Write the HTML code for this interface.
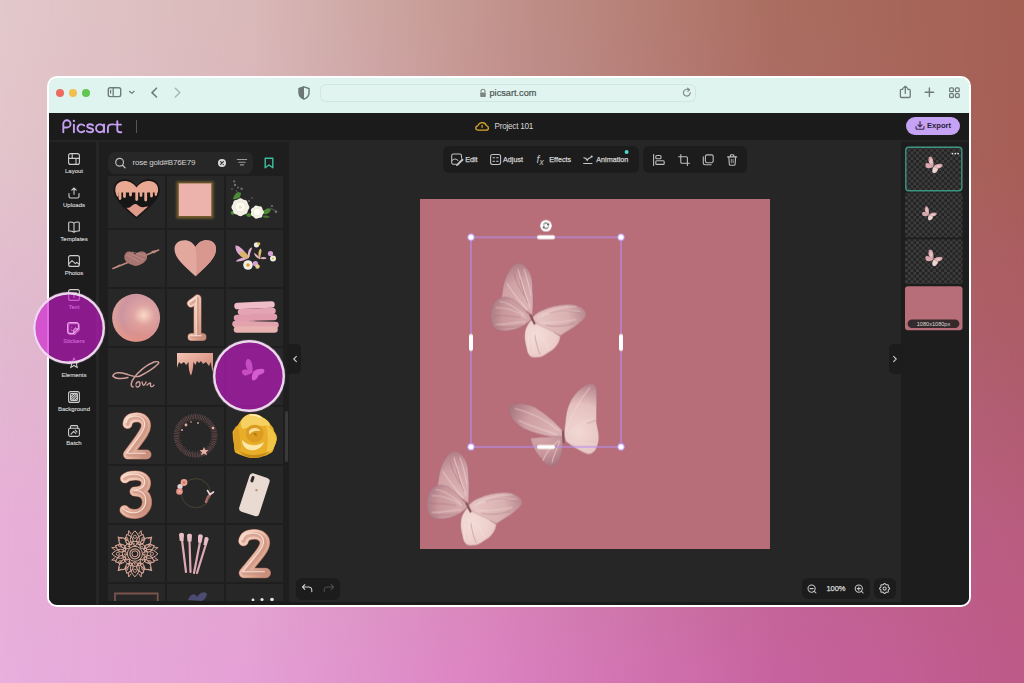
<!DOCTYPE html>
<html><head><meta charset="utf-8">
<style>
html,body{margin:0;padding:0;}
body{width:1024px;height:683px;position:relative;overflow:hidden;font-family:"Liberation Sans",sans-serif;background:#c98aa0;}
.a{position:absolute;}
#bg0{left:0px;top:0;width:256px;height:683px;background:linear-gradient(to bottom,#e3c8cb 15px,#e3c4cc 160px,#e2b8d0 341px,#e8b0d8 530px,#e9afdd 668px);}
#bm0{left:0px;top:0;width:256px;height:683px;background:linear-gradient(to bottom,#d9b8b8 15px,#dab6bb 160px,#ddb0c2 341px,#e2a5ce 530px,#e4a0d4 668px);-webkit-mask-image:linear-gradient(to right,transparent,#000);mask-image:linear-gradient(to right,transparent,#000);}
#bg1{left:256px;top:0;width:256px;height:683px;background:linear-gradient(to bottom,#d9b8b8 15px,#dab6bb 160px,#ddb0c2 341px,#e2a5ce 530px,#e4a0d4 668px);}
#bm1{left:256px;top:0;width:256px;height:683px;background:linear-gradient(to bottom,#c0918a 15px,#c28f8f 160px,#c98b9c 341px,#d484b3 530px,#da80be 668px);-webkit-mask-image:linear-gradient(to right,transparent,#000);mask-image:linear-gradient(to right,transparent,#000);}
#bg2{left:512px;top:0;width:256px;height:683px;background:linear-gradient(to bottom,#c0918a 15px,#c28f8f 160px,#c98b9c 341px,#d484b3 530px,#da80be 668px);}
#bm2{left:512px;top:0;width:256px;height:683px;background:linear-gradient(to bottom,#ab6e62 15px,#ae6d68 160px,#b56a78 341px,#c16693 530px,#c764a0 668px);-webkit-mask-image:linear-gradient(to right,transparent,#000);mask-image:linear-gradient(to right,transparent,#000);}
#bg3{left:768px;top:0;width:256px;height:683px;background:linear-gradient(to bottom,#ab6e62 15px,#ae6d68 160px,#b56a78 341px,#c16693 530px,#c764a0 668px);}
#bm3{left:768px;top:0;width:256px;height:683px;background:linear-gradient(to bottom,#a45f53 15px,#a65e56 160px,#ad5c68 341px,#b85c7e 530px,#bd5a88 668px);-webkit-mask-image:linear-gradient(to right,transparent,#000);mask-image:linear-gradient(to right,transparent,#000);}
#win{left:47px;top:76px;width:924px;height:531px;background:#fff;border-radius:10px;overflow:hidden;}
#inner{left:2px;top:1.6px;width:920px;height:527.4px;border-radius:8px;overflow:hidden;background:linear-gradient(to bottom,#e0f4ef 0,#e0f4ef 34.9px,#1b1b1b 34.9px);}
#chrome{left:0;top:0;width:920px;height:35px;background:#dff3ee;}
.txt{white-space:nowrap;}
</style></head>
<body>
<div class="a" id="bg0"></div><div class="a" id="bm0"></div><div class="a" id="bg1"></div><div class="a" id="bm1"></div><div class="a" id="bg2"></div><div class="a" id="bm2"></div><div class="a" id="bg3"></div><div class="a" id="bm3"></div>

<div class="a" id="win"><div class="a" id="inner"><div class="a" id="pg" style="left:-49px;top:-77.6px;width:1024px;height:683px;">
  <!-- chrome -->
  <div class="a" style="left:0;top:0;width:1024px;height:112.5px;background:#e0f4ef;"></div>
  <div class="a" style="left:56px;top:88.5px;width:8px;height:8px;border-radius:50%;background:#ec6a5e;"></div>
  <div class="a" style="left:69px;top:88.5px;width:8px;height:8px;border-radius:50%;background:#f3bd4f;"></div>
  <div class="a" style="left:82.4px;top:88.5px;width:8px;height:8px;border-radius:50%;background:#5fc553;"></div>
  <svg class="a" style="left:100px;top:80px" width="90" height="26" viewBox="0 0 90 26">
    <g fill="none" stroke="#6f7c78" stroke-linecap="round" stroke-linejoin="round">
      <rect x="8.3" y="7.8" width="12.4" height="8.8" rx="1.8" stroke-width="1.4"/>
      <line x1="13.2" y1="8" x2="13.2" y2="16.4" stroke-width="1.3"/>
      <line x1="10.6" y1="10.5" x2="10.6" y2="13" stroke-width="1.3"/>
      <path d="M29.5 11.3 L31.8 13.4 L34.1 11.3" stroke-width="1.2"/>
      <path d="M56.5 8.2 L52 12.6 L56.5 17" stroke-width="1.6"/>
      <path d="M75.3 8.2 L79.8 12.6 L75.3 17" stroke="#a8b6b1" stroke-width="1.4"/>
    </g>
  </svg>
  <svg class="a" style="left:296px;top:85px" width="16" height="16" viewBox="0 0 16 16">
    <path d="M8 1.8 L13 3.6 V8 C13 11 10.8 13 8 14.2 C5.2 13 3 11 3 8 V3.6 Z" fill="none" stroke="#6b7875" stroke-width="1.4"/>
    <path d="M8 1.8 V14.2 C5.2 13 3 11 3 8 V3.6 Z" fill="#6b7875"/>
  </svg>
  <div class="a" style="left:319.5px;top:83.5px;width:376px;height:18.5px;border-radius:6px;background:#e1f4ef;box-shadow:inset 0 0 0 1px #d2e6e0;"></div>
  <svg class="a" style="left:478px;top:88px" width="10" height="10" viewBox="0 0 10 10">
    <path d="M3 4.5 V3.2 C3 1.9 3.9 1.2 5 1.2 C6.1 1.2 7 1.9 7 3.2 V4.5" fill="none" stroke="#7b8784" stroke-width="1.1"/>
    <rect x="2.2" y="4.4" width="5.6" height="4.6" rx="0.8" fill="#7b8784"/>
  </svg>
  <div class="a txt" style="left:489.5px;top:86.5px;font-size:9.2px;line-height:13px;color:#4a5553;-webkit-text-stroke:0.2px #4a5553;">picsart.com</div>
  <svg class="a" style="left:681px;top:87px" width="12" height="12" viewBox="0 0 12 12">
    <path d="M9.2 5.6 A3.4 3.4 0 1 1 7.6 2.8" fill="none" stroke="#7d8986" stroke-width="1.1" stroke-linecap="round"/>
    <path d="M6.6 1.2 L8.6 2.8 L6.8 4.4" fill="none" stroke="#7d8986" stroke-width="1.1" stroke-linecap="round" stroke-linejoin="round"/>
  </svg>
  <svg class="a" style="left:890px;top:80px" width="80" height="26" viewBox="0 0 80 26">
    <g fill="none" stroke="#6f7c78" stroke-width="1.3" stroke-linecap="round" stroke-linejoin="round">
      <path d="M12.8 9.3 H11.3 C10.7 9.3 10.4 9.7 10.4 10.2 V16.7 C10.4 17.2 10.8 17.5 11.3 17.5 H19.3 C19.8 17.5 20.2 17.2 20.2 16.7 V10.2 C20.2 9.7 19.8 9.3 19.3 9.3 H17.8"/>
      <path d="M15.3 13.4 V6.3 M12.9 8.4 L15.3 6.1 L17.7 8.4"/>
      <path d="M39.4 8 V16.4 M35.2 12.2 H43.6" stroke-width="1.4"/>
      <rect x="59.6" y="7.9" width="3.8" height="3.8" rx="1"/>
      <rect x="65.4" y="7.9" width="3.8" height="3.8" rx="1"/>
      <rect x="59.6" y="13.7" width="3.8" height="3.8" rx="1"/>
      <rect x="65.4" y="13.7" width="3.8" height="3.8" rx="1"/>
    </g>
  </svg>
  <!-- header -->
  <div class="a" style="left:0;top:112.5px;width:1024px;height:28px;background:#1b1b1b;"></div>
  <div class="a" style="left:0;top:140px;width:1024px;height:1.8px;background:#252525;"></div>
  <svg class="a" style="left:58px;top:115px;overflow:visible" width="70" height="23" viewBox="58 115 70 23">
    <g fill="none" stroke="#c49ff2" stroke-width="1.9" stroke-linecap="round" stroke-linejoin="round">
      <path d="M63.3 132.2 V123.9 A3.6 3.6 0 1 1 66.9 127.5 H63.6"/>
      <path d="M73.9 124.6 V132.2"/>
      <path d="M84.2 125.6 A3.9 3.9 0 1 0 84.2 131"/>
      <path d="M93 125.3 C92.2 124.5 91.2 124.3 90 124.3 C88.4 124.3 87.3 125.1 87.3 126.3 C87.3 129 93.1 127.6 93.1 130.2 C93.1 131.5 91.9 132.3 90.2 132.3 C88.8 132.3 87.7 131.9 86.9 131.1"/>
      <circle cx="100" cy="128.3" r="3.95"/>
      <path d="M104 124.5 V132.2"/>
      <path d="M107.9 132.2 V127.8 C107.9 125.6 109.6 124.4 112 124.4 H113.8"/>
      <path d="M117.3 121.2 V129.4 C117.3 131.2 118.3 132.2 120 132.2 H121.3 M115.2 124.6 H121"/>
    </g>
    <circle cx="73.9" cy="120.9" r="1.15" fill="#c49ff2"/>
  </svg>
  <div class="a" style="left:136px;top:120px;width:1px;height:13px;background:#555;"></div>
  <svg class="a" style="left:474px;top:120px" width="16" height="13" viewBox="0 0 16 13">
    <path d="M4.4 10.2 C2.6 10.2 1.8 9.2 1.8 8 C1.8 6.8 2.7 6 3.9 5.9 C4.6 3.9 6.2 2.6 8.3 2.6 C10.3 2.6 11.8 3.8 12.3 5.6 C13.6 5.8 14.4 6.7 14.4 7.9 C14.4 9.2 13.4 10.2 12 10.2 Z" fill="none" stroke="#d9a92c" stroke-width="1.3" stroke-linejoin="round"/>
    <path d="M8.1 5.3 V7.4" stroke="#d9a92c" stroke-width="1.1" stroke-linecap="round"/>
  </svg>
  <div class="a txt" style="left:494.5px;top:121.5px;font-size:8.2px;line-height:10px;color:#d6d6d6;letter-spacing:-0.25px;">Project 101</div>
  <div class="a" style="left:906px;top:117px;width:54px;height:18px;border-radius:9px;background:#c6a2f4;"></div>
  <svg class="a" style="left:914px;top:120px" width="12" height="11" viewBox="0 0 12 11">
    <path d="M6 1.5 V6.8 M4 4.8 L6 6.9 L8 4.8" fill="none" stroke="#3a2a4a" stroke-width="1.2" stroke-linecap="round" stroke-linejoin="round"/>
    <path d="M2 6.5 V8 C2 8.8 2.6 9.3 3.3 9.3 H8.7 C9.4 9.3 10 8.8 10 8 V6.5" fill="none" stroke="#3a2a4a" stroke-width="1.1" stroke-linecap="round"/>
  </svg>
  <div class="a txt" style="left:927px;top:121px;font-size:7.6px;line-height:9px;font-weight:700;color:#2a1d36;">Export</div>
  <!-- sidebar -->
  <div class="a" style="left:49px;top:141.8px;width:47px;height:459px;background:#1c1c1c;"></div>
  <div class="a" style="left:96px;top:141px;width:3px;height:464px;background:#262626;"></div>
<!--SIDEBAR-->
  <svg class="a" style="left:68px;top:153px" width="12" height="12" viewBox="0 0 12 12"><g fill="none" stroke="#cdcdcd" stroke-width="1.1" stroke-linecap="round" stroke-linejoin="round"><rect x="0.6" y="0.6" width="10.8" height="10.8" rx="2"/><path d="M0.6 5.4 H11.4 M4.2 0.6 V5.4 M8 5.4 V11.4"/></g></svg>
  <div class="a txt" style="left:23px;width:102px;text-align:center;top:168.4px;font-size:6px;line-height:6px;color:#d2d2d2;-webkit-text-stroke:0.15px #d2d2d2;">Layout</div>
  <svg class="a" style="left:68px;top:187px" width="12" height="12" viewBox="0 0 12 12"><g fill="none" stroke="#cdcdcd" stroke-width="1.1" stroke-linecap="round" stroke-linejoin="round"><path d="M6 1 V7.2 M3.8 3.2 L6 1 L8.2 3.2"/><path d="M1 6.5 V9.4 C1 10.4 1.6 11 2.6 11 H9.4 C10.4 11 11 10.4 11 9.4 V6.5"/></g></svg>
  <div class="a txt" style="left:23px;width:102px;text-align:center;top:202.4px;font-size:6px;line-height:6px;color:#d2d2d2;-webkit-text-stroke:0.15px #d2d2d2;">Uploads</div>
  <svg class="a" style="left:68px;top:221px" width="12" height="12" viewBox="0 0 12 12"><g fill="none" stroke="#cdcdcd" stroke-width="1.1" stroke-linecap="round" stroke-linejoin="round"><path d="M6 2.2 C4.8 1.2 3.2 0.9 1.6 1 C1 1 0.7 1.4 0.7 2 V10 C2.6 9.8 4.5 10.2 6 11.2 C7.5 10.2 9.4 9.8 11.3 10 V2 C11.3 1.4 11 1 10.4 1 C8.8 0.9 7.2 1.2 6 2.2 Z M6 2.2 V11.2"/></g></svg>
  <div class="a txt" style="left:23px;width:102px;text-align:center;top:236.4px;font-size:6px;line-height:6px;color:#d2d2d2;-webkit-text-stroke:0.15px #d2d2d2;">Templates</div>
  <svg class="a" style="left:68px;top:255px" width="12" height="12" viewBox="0 0 12 12"><g fill="none" stroke="#cdcdcd" stroke-width="1.1" stroke-linecap="round" stroke-linejoin="round"><rect x="0.6" y="0.6" width="10.8" height="10.8" rx="2"/><path d="M0.8 8.8 L4 5.6 L7.4 8.6 L8.8 7.4 L11.2 9.2"/></g></svg>
  <div class="a txt" style="left:23px;width:102px;text-align:center;top:270.4px;font-size:6px;line-height:6px;color:#d2d2d2;-webkit-text-stroke:0.15px #d2d2d2;">Photos</div>
  <svg class="a" style="left:68px;top:289px" width="12" height="12" viewBox="0 0 12 12"><g fill="none" stroke="#cdcdcd" stroke-width="1.1" stroke-linecap="round" stroke-linejoin="round"><rect x="0.6" y="0.6" width="10.8" height="10.8" rx="2"/><path d="M3.6 4 H8.4 M6 4 V8.6"/></g></svg>
  <div class="a txt" style="left:23px;width:102px;text-align:center;top:304.4px;font-size:6px;line-height:6px;color:#d2d2d2;-webkit-text-stroke:0.15px #d2d2d2;">Text</div>
  <svg class="a" style="left:68px;top:323px" width="12" height="12" viewBox="0 0 12 12"><g fill="none" stroke="#cdcdcd" stroke-width="1.1" stroke-linecap="round" stroke-linejoin="round"><path d="M11.4 6.8 V2.6 C11.4 1.4 10.6 0.6 9.4 0.6 H2.6 C1.4 0.6 0.6 1.4 0.6 2.6 V9.4 C0.6 10.6 1.4 11.4 2.6 11.4 H6.8 Z M6.8 11.4 V8.4 C6.8 7.5 7.5 6.8 8.4 6.8 H11.4"/><path d="M3.8 4 V4.6 M7.6 4 V4.6 M3.2 6.8 C3.8 7.6 4.6 8 5.4 8"/></g></svg>
  <div class="a txt" style="left:23px;width:102px;text-align:center;top:338.4px;font-size:6px;line-height:6px;color:#d2d2d2;-webkit-text-stroke:0.15px #d2d2d2;">Stickers</div>
  <svg class="a" style="left:68px;top:357px" width="12" height="12" viewBox="0 0 12 12"><g fill="none" stroke="#cdcdcd" stroke-width="1.1" stroke-linecap="round" stroke-linejoin="round"><path d="M6 0.8 L7.4 4.2 L11.2 4.4 L8.3 6.8 L9.3 10.6 L6 8.5 L2.7 10.6 L3.7 6.8 L0.8 4.4 L4.6 4.2 Z"/></g></svg>
  <div class="a txt" style="left:23px;width:102px;text-align:center;top:372.4px;font-size:6px;line-height:6px;color:#d2d2d2;-webkit-text-stroke:0.15px #d2d2d2;">Elements</div>
  <svg class="a" style="left:68px;top:391px" width="12" height="12" viewBox="0 0 12 12"><g fill="none" stroke="#cdcdcd" stroke-width="1.1" stroke-linecap="round" stroke-linejoin="round"><rect x="0.6" y="0.6" width="10.8" height="10.8" rx="2"/><rect x="2.6" y="2.6" width="6.8" height="6.8" rx="0.6"/><path d="M2.8 6 L6 2.8 M2.8 8.4 L8.4 2.8 M4.4 9.2 L9.2 4.4 M6.8 9.2 L9.2 6.8"/></g></svg>
  <div class="a txt" style="left:23px;width:102px;text-align:center;top:406.4px;font-size:6px;line-height:6px;color:#d2d2d2;-webkit-text-stroke:0.15px #d2d2d2;">Background</div>
  <svg class="a" style="left:68px;top:425px" width="12" height="12" viewBox="0 0 12 12"><g fill="none" stroke="#cdcdcd" stroke-width="1.1" stroke-linecap="round" stroke-linejoin="round"><path d="M2.4 3.2 V1.8 C2.4 1.1 2.9 0.6 3.6 0.6 H8.6 C9.3 0.6 9.8 1.1 9.8 1.8 V3.2"/><rect x="0.6" y="3.2" width="10.8" height="8.2" rx="1.6"/><path d="M3 9.2 L5.6 6.4 L7.8 8.4 M7.2 5.2 L9 7"/></g></svg>
  <div class="a txt" style="left:23px;width:102px;text-align:center;top:440.4px;font-size:6px;line-height:6px;color:#d2d2d2;-webkit-text-stroke:0.15px #d2d2d2;">Batch</div>
<!--/SIDEBAR-->
  <!-- sticker panel -->
  <div class="a" style="left:99px;top:141.8px;width:190px;height:459px;background:#1e1e1e;"></div>
<!--PANEL-->
  <div class="a" style="left:99px;top:141px;width:190px;height:460px;overflow:hidden;">
   <div class="a" style="left:-99px;top:-141px;width:1024px;height:683px;">
<div class="a" style="left:108px;top:171px;width:57px;height:57px;background:#272727;"></div>
<div class="a" style="left:167px;top:171px;width:57px;height:57px;background:#272727;"></div>
<div class="a" style="left:226px;top:171px;width:57px;height:57px;background:#272727;"></div>
<div class="a" style="left:108px;top:230px;width:57px;height:57px;background:#272727;"></div>
<div class="a" style="left:167px;top:230px;width:57px;height:57px;background:#272727;"></div>
<div class="a" style="left:226px;top:230px;width:57px;height:57px;background:#272727;"></div>
<div class="a" style="left:108px;top:289px;width:57px;height:57px;background:#272727;"></div>
<div class="a" style="left:167px;top:289px;width:57px;height:57px;background:#272727;"></div>
<div class="a" style="left:226px;top:289px;width:57px;height:57px;background:#272727;"></div>
<div class="a" style="left:108px;top:348px;width:57px;height:57px;background:#272727;"></div>
<div class="a" style="left:167px;top:348px;width:57px;height:57px;background:#272727;"></div>
<div class="a" style="left:226px;top:348px;width:57px;height:57px;background:#272727;"></div>
<div class="a" style="left:108px;top:407px;width:57px;height:57px;background:#272727;"></div>
<div class="a" style="left:167px;top:407px;width:57px;height:57px;background:#272727;"></div>
<div class="a" style="left:226px;top:407px;width:57px;height:57px;background:#272727;"></div>
<div class="a" style="left:108px;top:466px;width:57px;height:57px;background:#272727;"></div>
<div class="a" style="left:167px;top:466px;width:57px;height:57px;background:#272727;"></div>
<div class="a" style="left:226px;top:466px;width:57px;height:57px;background:#272727;"></div>
<div class="a" style="left:108px;top:525px;width:57px;height:57px;background:#272727;"></div>
<div class="a" style="left:167px;top:525px;width:57px;height:57px;background:#272727;"></div>
<div class="a" style="left:226px;top:525px;width:57px;height:57px;background:#272727;"></div>
<div class="a" style="left:108px;top:584px;width:57px;height:57px;background:#272727;"></div>
<div class="a" style="left:167px;top:584px;width:57px;height:57px;background:#272727;"></div>
<div class="a" style="left:226px;top:584px;width:57px;height:57px;background:#272727;"></div>
<!--STICKERS-->
  <svg class="a" style="left:98px;top:141px" width="191" height="460" viewBox="98 141 191 460">
    <defs>
      <linearGradient id="rg1" x1="0" y1="0" x2="1" y2="1"><stop offset="0" stop-color="#f3c4b4"/><stop offset="0.5" stop-color="#e0a090"/><stop offset="1" stop-color="#c98272"/></linearGradient>
      <linearGradient id="rg2" x1="0" y1="0" x2="0" y2="1"><stop offset="0" stop-color="#d9958a"/><stop offset="1" stop-color="#c47a70"/></linearGradient>
      <radialGradient id="sph" cx="0.66" cy="0.45" r="0.62"><stop offset="0" stop-color="#fad8c6"/><stop offset="0.35" stop-color="#dea4a2"/><stop offset="0.75" stop-color="#cc94a0"/><stop offset="1" stop-color="#dca09c"/></radialGradient><linearGradient id="sph2" x1="0" y1="0" x2="0" y2="1"><stop offset="0.5" stop-color="#e88c78" stop-opacity="0"/><stop offset="1" stop-color="#ec8c78" stop-opacity="0.6"/></linearGradient>
      <linearGradient id="bal" x1="0" y1="0" x2="1" y2="1"><stop offset="0" stop-color="#f6d6c6"/><stop offset="0.5" stop-color="#e8b8a4"/><stop offset="1" stop-color="#c8907c"/></linearGradient>
      <linearGradient id="brush" x1="0" y1="0" x2="1" y2="1"><stop offset="0" stop-color="#f0c0c8"/><stop offset="0.5" stop-color="#e0a0b0"/><stop offset="1" stop-color="#f0c8c0"/></linearGradient>
      <radialGradient id="gold" cx="0.45" cy="0.4" r="0.6"><stop offset="0" stop-color="#fbe4a0"/><stop offset="0.5" stop-color="#efc04a"/><stop offset="1" stop-color="#c89020"/></radialGradient>
      <filter id="glow" x="-30%" y="-30%" width="160%" height="160%"><feGaussianBlur stdDeviation="1.2"/></filter>
      <filter id="sft" x="-20%" y="-20%" width="140%" height="140%"><feGaussianBlur stdDeviation="0.35"/></filter>
    </defs>
    <g filter="url(#sft)">
    <!-- r1c1 drip heart -->
    <clipPath id="hclip"><path d="M136.5 216.8 C128.5 209.5 115.5 200 115.3 190 C115.2 184.5 119 181 124.5 181 C129.5 181 133.5 183.5 136.5 187.5 C139.5 183.5 143.5 181 149 181 C154.5 181 158.2 184.5 158.1 190 C158 200 144.5 209.5 136.5 216.8 Z"/></clipPath>
    <path d="M136.5 218.7 C128 211 114 201 113.7 190 C113.5 183.5 118 179.3 124.5 179.3 C130 179.3 134 182 136.5 186 C139.5 182 143.5 179.3 149 179.3 C155.5 179.3 159.7 183.5 159.7 190 C159.7 201 145 211 136.5 218.7 Z" fill="#191515"/>
    <g clip-path="url(#hclip)">
      <rect x="110" y="175" width="55" height="17.5" fill="#e9a892"/>
      <g stroke="#e9a892" stroke-width="2.8" stroke-linecap="round">
        <path d="M117 191 V195.5 M120 191 V198.5 M124.5 191 V196.5 M130.5 191 V195 M136.7 191 V199.5 M141 191 V195.5 M145.7 191 V200 M151.5 191 V196 M156 191 V194.5"/>
      </g>
      <path d="M110 208.5 L122.8 208.5 C126 207 128 209 131 206.5 C133 204.5 135 203.5 137 204.5 C139 206 141 208 144 207 C147 206 149 206.5 151 206.8 L165 206.8 V225 H110 Z" fill="#df9a8a"/>
    </g>
    <!-- r1c2 square -->
    <rect x="176.5" y="181.5" width="37" height="37" fill="#b88a30" filter="url(#glow)" opacity="0.55"/>
    <rect x="178.8" y="183.4" width="32.5" height="32.6" fill="#ecb3ad"/>
    <!-- r1c3 roses -->
    <g fill="#8a8a80" opacity="0.75">
      <circle cx="234.2" cy="181.4" r="1.1"/><circle cx="235" cy="185" r="1.2"/><circle cx="238" cy="187.5" r="0.9"/><circle cx="241.6" cy="188.8" r="1.2"/><circle cx="232" cy="189" r="0.8"/>
      <circle cx="272" cy="206" r="1.1"/><circle cx="276" cy="211.7" r="1.3"/><circle cx="268" cy="209" r="0.8"/><circle cx="252" cy="198" r="0.8"/><circle cx="249" cy="201" r="0.9"/>
    </g>
    <path d="M236 190 C238 194 240 198 241 200 M270 208 C272 209 274 210 276 211" stroke="#666660" stroke-width="0.8" fill="none"/>
    <g fill="#4e8a34">
      <path d="M233 199 C234 194 238 191 241 193 C241 197 237 200 233 199 Z"/>
      <path d="M230.5 213 C231.5 210.5 234 210 235.5 212 C234.5 215 232 216 230.5 213 Z"/>
      <path d="M246 215 C248 212.5 251 213 252 215.5 C250 217.5 247.5 217.5 246 215 Z"/>
      <path d="M262 213 C264 209 268 207.5 271 209 C270 213 266 216 262 213 Z"/>
      <path d="M262 216 C265 215 268 215.5 270 217 C267 218.5 264 218 262 216 Z" opacity="0.8"/>
    </g>
    <path d="M249.45 207.20 L248.83 208.88 L247.93 210.32 L247.55 211.98 L246.80 213.60 L245.18 214.35 L243.52 214.73 L242.08 215.63 L240.40 216.25 L238.72 215.63 L237.28 214.73 L235.62 214.35 L234.00 213.60 L233.25 211.98 L232.87 210.32 L231.97 208.88 L231.35 207.20 L231.97 205.52 L232.87 204.08 L233.25 202.42 L234.00 200.80 L235.62 200.05 L237.28 199.67 L238.72 198.77 L240.40 198.15 L242.08 198.77 L243.52 199.67 L245.18 200.05 L246.80 200.80 L247.55 202.42 L247.93 204.08 L248.83 205.52 Z" fill="#f3f0e6"/>
    <path d="M245.60 207.00 L245.03 208.29 L244.18 209.30 L243.74 210.54 L242.90 211.68 L241.49 211.83 L240.20 211.60 L238.91 211.83 L237.50 211.68 L236.66 210.54 L236.22 209.30 L235.37 208.29 L234.80 207.00 L235.37 205.71 L236.22 204.70 L236.66 203.46 L237.50 202.32 L238.91 202.17 L240.20 202.40 L241.49 202.17 L242.90 202.32 L243.74 203.46 L244.18 204.70 L245.03 205.71 Z" fill="#fffdf2" stroke="#e4dcc8" stroke-width="0.6"/>
    <circle cx="240.2" cy="207.2" r="1.6" fill="#efe2c0"/>
    <path d="M264.00 212.10 L263.44 213.52 L262.61 214.70 L262.20 216.09 L261.44 217.42 L259.98 217.87 L258.54 217.95 L257.20 218.50 L255.69 218.73 L254.42 217.87 L253.46 216.79 L252.20 216.09 L251.07 215.05 L250.96 213.52 L251.20 212.10 L250.96 210.68 L251.07 209.15 L252.20 208.11 L253.46 207.41 L254.42 206.33 L255.69 205.47 L257.20 205.70 L258.54 206.25 L259.98 206.33 L261.44 206.78 L262.20 208.11 L262.61 209.50 L263.44 210.68 Z" fill="#f3f0e6"/>
    <path d="M260.90 212.00 L260.42 213.11 L259.67 213.94 L259.12 214.91 L258.21 215.71 L257.00 215.60 L255.98 215.14 L254.88 214.91 L253.84 214.29 L253.58 213.11 L253.70 212.00 L253.58 210.89 L253.84 209.71 L254.88 209.09 L255.98 208.86 L257.00 208.40 L258.21 208.29 L259.12 209.09 L259.67 210.06 L260.42 210.89 Z" fill="#fffdf2" stroke="#e4dcc8" stroke-width="0.5"/>
    <!-- r2c1 arrow heart -->
    <path d="M113 268.4 L158.6 250" stroke="#c08a80" stroke-width="1.6" stroke-linecap="round"/>
    <path d="M113 268.4 L120 264 L118 267 Z M158.6 250 L151 251 L154 253.5 Z" fill="#c08a80"/>
    <path d="M136 266 C130 265 124 262 124.3 257 C124.5 253 127 251 130 251.5 C132 251.8 134 253 135 254.5 C137 252 140 251 143 251.5 C146 252 147.5 255 147 258 C146 262 141 265 136 266 Z" fill="#a87470"/>
    <path d="M127 255 L140 262 M129 253 L144 260 M132 252 L146 256" stroke="#c89890" stroke-width="0.6"/>
    <!-- r2c2 heart -->
    <path d="M195.5 276.3 C186 267 174.5 259 174.5 249 C174.5 243.5 179 240.3 184.5 240.3 C189.5 240.3 193 243 195.5 247 C198 243 201.5 240.3 206.5 240.3 C212 240.3 216 243.5 216 249 C216 259 205 267 195.5 276.3 Z" fill="#e2a89e"/>
    <path d="M195.5 276.3 C198 266 196 255 195.5 247 C198 243 201.5 240.3 206.5 240.3 C212 240.3 216 243.5 216 249 C216 259 205 267 195.5 276.3 Z" fill="#d89890"/>
    <!-- r2c3 flowers butterflies -->
    <path d="M249 257 C244 250 239 245 235.5 245.5 C235 250 238 255 243 257.5 C239 258.5 236 260.5 236 261.5 C240 262 245 260 249 258 Z" fill="#dcaad0"/>
    <ellipse cx="244" cy="255" rx="4.5" ry="2.6" transform="rotate(35 244 255)" fill="#d8b45a" opacity="0.9"/>
    <path d="M249.5 257 C250 252 252.5 248.5 251.8 247.5 C249 248 247.5 252 248 257 Z" fill="#e4b4d4"/>
    <path d="M260 258 C257 255 255 252.5 254 253 C254.5 256 257 258.5 260 259 Z" fill="#e0b4c8"/>
    <path d="M260 258.5 C261 253 262.5 250 260.5 248.5 C258 251 258 255 259 258.5 Z" fill="#e4bc70"/>
    <path d="M260 258.5 C263 259.5 266 259.5 266.5 258 C264.5 256.5 262 257 260 258 Z" fill="#e0b0c8"/>
    <circle cx="248" cy="265" r="4.8" fill="#f2eee6"/><circle cx="248" cy="265" r="1.8" fill="#e0a028"/>
    <circle cx="255.4" cy="263.6" r="2.6" fill="#d6a0d6"/><circle cx="257.5" cy="266.5" r="2.2" fill="#e8d090"/>
    <circle cx="270.5" cy="253.5" r="2.6" fill="#d6a0d6"/><circle cx="273" cy="258.5" r="3" fill="#f0ece0"/><circle cx="273" cy="258.5" r="1.1" fill="#e0c050"/>
    <circle cx="256.5" cy="244.8" r="2.6" fill="#f0ece0"/><circle cx="258.8" cy="243.8" r="1.5" fill="#e0c050"/>
    <!-- r3c1 sphere -->
    <circle cx="136.1" cy="317.8" r="24" fill="url(#sph)"/><circle cx="136.1" cy="317.8" r="24" fill="url(#sph2)"/>
    <!-- r3c2 balloon 1 -->
    <path d="M191 303.5 C193 302 196 300 197.5 298.5 V337 M191.5 337 H202.5" fill="none" stroke="#9a5e50" stroke-width="8.2" stroke-linecap="round" stroke-linejoin="round"/><path d="M191 303.5 C193 302 196 300 197.5 298.5 V337 M191.5 337 H202.5" fill="none" stroke="url(#bal)" stroke-width="7" stroke-linecap="round" stroke-linejoin="round"/><path d="M191 303.5 C193 302 196 300 197.5 298.5 V337 M191.5 337 H202.5" fill="none" stroke="#c88a78" stroke-width="3.1" stroke-linecap="round" stroke-linejoin="round" opacity="0.55"/><path d="M191 303.5 C193 302 196 300 197.5 298.5 V337 M191.5 337 H202.5" fill="none" stroke="#fff0e8" stroke-width="1.1" stroke-linecap="round" stroke-linejoin="round" opacity="0.8" transform="translate(-1.3 -1.3)"/>
    <!-- r3c3 brush strokes -->
    <g stroke-linecap="round" stroke-width="6.5">
      <path d="M237.5 306 L271.5 304.5" stroke="#eebcc4"/>
      <path d="M241 312 L272.5 311" stroke="#e4a4b4"/>
      <path d="M237 318 L274 317" stroke="#e09cae"/>
      <path d="M235.5 324 L275.5 325" stroke="#e2a2ae"/>
      <path d="M237 329.5 L274.5 329.5" stroke="#e8b2b0"/>
    </g>
    <!-- r4c1 love script -->
    <g fill="none" stroke="#d2a09c" stroke-width="1.4" stroke-linecap="round">
      <path d="M113 376 C114 372 120 372 126 374 C132 376 136 378 140 376 C148 372 156 366 158 364 C160 362 158 361 154 362 C146 365 138 372 134 378 C131 382 130 386 133 387"/>
      <path d="M113 376 C115 379 122 379 128 377.5"/>
      <path d="M136 384 C137 381 140 381 140 384 C140 387 137 388 136 386 M142 382 C143 386 144 387 146 382 M147 385 C149 383 151 382 150.5 384.5 C150 387 152.5 387.5 154 385"/>
    </g>
    <!-- r4c2 drip bar -->
    <path d="M177 353 L213 353 L213 372 C212 370 211 366 211 362 L209 366 L206 362 L203 364 L201 361 L199 363 L197 361 L195.5 365 L193.5 362 C193 368 192.5 372 191 375.5 C189.2 373 188.6 367 188.5 362 L186 365 L184 362 L181 364 L179 362 L177 368 Z" fill="url(#rg1)"/>
    <!-- r5c1 balloon 2 -->
    <path d="M127.5 424 C128 419 132 417.3 137 417.3 C142.5 417.3 146.2 421 146 426 C145.8 432 140 438 128 454.5 H146.5" fill="none" stroke="#9a5e50" stroke-width="10.2" stroke-linecap="round" stroke-linejoin="round"/><path d="M127.5 424 C128 419 132 417.3 137 417.3 C142.5 417.3 146.2 421 146 426 C145.8 432 140 438 128 454.5 H146.5" fill="none" stroke="url(#bal)" stroke-width="9" stroke-linecap="round" stroke-linejoin="round"/><path d="M127.5 424 C128 419 132 417.3 137 417.3 C142.5 417.3 146.2 421 146 426 C145.8 432 140 438 128 454.5 H146.5" fill="none" stroke="#c88a78" stroke-width="4.0" stroke-linecap="round" stroke-linejoin="round" opacity="0.55"/><path d="M127.5 424 C128 419 132 417.3 137 417.3 C142.5 417.3 146.2 421 146 426 C145.8 432 140 438 128 454.5 H146.5" fill="none" stroke="#fff0e8" stroke-width="1.1" stroke-linecap="round" stroke-linejoin="round" opacity="0.8" transform="translate(-1.3 -1.3)"/>
    <!-- r5c2 glitter wreath -->
    <circle cx="195.5" cy="435.8" r="19" fill="none" stroke="#6e4e4e" stroke-width="4.5" stroke-dasharray="0.9 0.8" opacity="0.85"/>
    <circle cx="195.5" cy="435.8" r="21.5" fill="none" stroke="#8a6262" stroke-width="1" stroke-dasharray="0.6 2.4"/>
    <circle cx="195.5" cy="435.8" r="16" fill="none" stroke="#8a6262" stroke-width="0.8" stroke-dasharray="0.6 2.2"/>
    <circle cx="186" cy="425" r="1.4" fill="#e8b0a0"/><circle cx="213" cy="428" r="1.3" fill="#e8b0a0"/><circle cx="182" cy="430" r="1" fill="#e0a898"/><circle cx="198" cy="423" r="0.9" fill="#e0a898"/><circle cx="191" cy="422" r="0.8" fill="#e0a898"/>
    <path d="M204 447 L205.3 450 L208.5 450.2 L206 452.2 L207 455.4 L204 453.6 L201 455.4 L202 452.2 L199.5 450.2 L202.7 450 Z" fill="#eab0a8"/>
    <!-- r5c3 gold rose -->
    <path d="M250.6 413.7 C256 414 260 415 262 417 C266 419 269 421 270.3 424.4 C273 427 274 429 274 431 C276 434 277 436 276.9 438.4 C276.5 441 275.5 444 274.5 446 C274 449 273 451 272 452.3 C269 454 267 455.5 264 456 C261 457 258 458 254.7 458 C251 458 248 457.5 245 456.5 C241 455.5 237.5 454 235 452.3 C234 449 234 446.5 234 444 C233 440 232.5 436 232.6 431.8 C234 429 236 427 238 425 C239.5 422 241 420 243 418 C245.5 415.5 248 414 250.6 413.7 Z" fill="#e8ae2a"/>
    <path d="M243 418 C248 413 256 413 262 417 C267 420 270 423 270.3 426 C262 425 252 426 243 429 C240 426 240 421 243 418 Z" fill="#f6d060"/>
    <path d="M266 425 C272 428 276 434 276.5 440 C275 447 272 452 266 454 C268 446 269 436 266 425 Z" fill="#f2c444"/>
    <path d="M236 426 C240 430 240 440 241 448 C238 452 235 452 234.5 447 C233 440 233 432 236 426 Z" fill="#dea024"/>
    <path d="M246 430 C249 424 258 423 262 428 C265 433 263 440 258 442 C252 444 246 440 246 434 Z" fill="#dc9c22"/>
    <path d="M249 431 C252 427 258 427 260.5 431 C256 430 252 431 249 434.5 Z" fill="#fbe098"/>
    <path d="M253 433 C255 432 257 433 257 436 C255 436 254 435 253 433 Z" fill="#b87c10"/>
    <path d="M242 440 C248 446 256 447 264 442 C262 448 256 451 250 450 C245 449 242 445 242 440 Z" fill="#fde8a8"/>
    <path d="M238 450 C246 456 258 457 270 451 C266 455 260 457.5 254.7 458 C248 458 242 455 238 450 Z" fill="#c88a16"/>
    <path d="M250 415 C254 414.5 258 415.5 261 417.5" stroke="#fff4c8" stroke-width="1.2" fill="none"/>
    <!-- r6c1 balloon 3 -->
    <path d="M125 478.5 C127.5 476 131.5 475.5 135.5 475.5 C141.5 475.5 146 478.5 146 483.2 C146 488 141.5 491.5 134.5 491.5 C142 491.5 147 495 147 502 C147 509 141.5 514 135 514 C130 514 126.5 512.5 124.5 510" fill="none" stroke="#9a5e50" stroke-width="10.2" stroke-linecap="round" stroke-linejoin="round"/><path d="M125 478.5 C127.5 476 131.5 475.5 135.5 475.5 C141.5 475.5 146 478.5 146 483.2 C146 488 141.5 491.5 134.5 491.5 C142 491.5 147 495 147 502 C147 509 141.5 514 135 514 C130 514 126.5 512.5 124.5 510" fill="none" stroke="url(#bal)" stroke-width="9" stroke-linecap="round" stroke-linejoin="round"/><path d="M125 478.5 C127.5 476 131.5 475.5 135.5 475.5 C141.5 475.5 146 478.5 146 483.2 C146 488 141.5 491.5 134.5 491.5 C142 491.5 147 495 147 502 C147 509 141.5 514 135 514 C130 514 126.5 512.5 124.5 510" fill="none" stroke="#c88a78" stroke-width="4.0" stroke-linecap="round" stroke-linejoin="round" opacity="0.55"/><path d="M125 478.5 C127.5 476 131.5 475.5 135.5 475.5 C141.5 475.5 146 478.5 146 483.2 C146 488 141.5 491.5 134.5 491.5 C142 491.5 147 495 147 502 C147 509 141.5 514 135 514 C130 514 126.5 512.5 124.5 510" fill="none" stroke="#fff0e8" stroke-width="1.1" stroke-linecap="round" stroke-linejoin="round" opacity="0.8" transform="translate(-1.3 -1.3)"/>
    <!-- r6c2 floral wreath -->
    <circle cx="195.9" cy="493.2" r="14.6" fill="none" stroke="#4a4232" stroke-width="1"/>
    <circle cx="184" cy="482.5" r="3.4" fill="#e8a090"/><circle cx="184" cy="482.5" r="1.2" fill="#d07060"/>
    <circle cx="180" cy="486.5" r="2.6" fill="#e4d0d8"/>
    <circle cx="179.5" cy="491.5" r="3.3" fill="#e8908a"/><circle cx="179.5" cy="491.5" r="1.1" fill="#f0d090"/>
    <path d="M206 502 C207 498 208.5 496 210 494.5" stroke="#a86868" stroke-width="2.6" stroke-linecap="round" fill="none"/>
    <path d="M210 494.5 L207.5 490.5 M210 494.5 L213.5 492" stroke="#ecd4d8" stroke-width="1.6" stroke-linecap="round"/>
    <!-- r6c3 iphone -->
    <g transform="translate(254.4 494.8) rotate(18)">
      <rect x="-10.5" y="-20" width="21" height="40" rx="3.5" fill="#eadbd2"/>
      <rect x="-8.2" y="-17.5" width="3" height="6.5" rx="1.4" fill="#2e2828"/>
      <circle cx="0.5" cy="-5" r="1.2" fill="#c09070"/>
    </g>
    <!-- r7c1 mandala -->
    <g fill="none" stroke="#dcac9c" stroke-width="1">
      <circle cx="134.9" cy="553.8" r="3"/>
      <circle cx="134.9" cy="553.8" r="7.5"/>
      <circle cx="134.9" cy="553.8" r="12.5"/>
      <g transform="translate(134.9 553.8)">
        <path d="M0 -23 C6 -17 6 -11 0 -8 C-6 -11 -6 -17 0 -23 Z" /><path d="M0 -23 C6 -17 6 -11 0 -8 C-6 -11 -6 -17 0 -23 Z" transform="rotate(45)"/>
        <path d="M0 -23 C6 -17 6 -11 0 -8 C-6 -11 -6 -17 0 -23 Z" transform="rotate(90)"/><path d="M0 -23 C6 -17 6 -11 0 -8 C-6 -11 -6 -17 0 -23 Z" transform="rotate(135)"/>
        <path d="M0 -23 C6 -17 6 -11 0 -8 C-6 -11 -6 -17 0 -23 Z" transform="rotate(180)"/><path d="M0 -23 C6 -17 6 -11 0 -8 C-6 -11 -6 -17 0 -23 Z" transform="rotate(225)"/>
        <path d="M0 -23 C6 -17 6 -11 0 -8 C-6 -11 -6 -17 0 -23 Z" transform="rotate(270)"/><path d="M0 -23 C6 -17 6 -11 0 -8 C-6 -11 -6 -17 0 -23 Z" transform="rotate(315)"/>
        <path d="M0 -21 C5 -16 5 -12 0 -10 C-5 -12 -5 -16 0 -21 Z" transform="rotate(22.5)"/><path d="M0 -21 C5 -16 5 -12 0 -10 C-5 -12 -5 -16 0 -21 Z" transform="rotate(67.5)"/>
        <path d="M0 -21 C5 -16 5 -12 0 -10 C-5 -12 -5 -16 0 -21 Z" transform="rotate(112.5)"/><path d="M0 -21 C5 -16 5 -12 0 -10 C-5 -12 -5 -16 0 -21 Z" transform="rotate(157.5)"/>
        <path d="M0 -21 C5 -16 5 -12 0 -10 C-5 -12 -5 -16 0 -21 Z" transform="rotate(202.5)"/><path d="M0 -21 C5 -16 5 -12 0 -10 C-5 -12 -5 -16 0 -21 Z" transform="rotate(247.5)"/>
        <path d="M0 -21 C5 -16 5 -12 0 -10 C-5 -12 -5 -16 0 -21 Z" transform="rotate(292.5)"/><path d="M0 -21 C5 -16 5 -12 0 -10 C-5 -12 -5 -16 0 -21 Z" transform="rotate(337.5)"/>
      </g>
    </g>
    <g transform="translate(134.9 553.8)" fill="none" stroke="#d4a090" stroke-width="0.9"><circle cx="0" cy="-17" r="1.6" transform="rotate(0)"/><circle cx="0" cy="-17" r="1.6" transform="rotate(30)"/><circle cx="0" cy="-17" r="1.6" transform="rotate(60)"/><circle cx="0" cy="-17" r="1.6" transform="rotate(90)"/><circle cx="0" cy="-17" r="1.6" transform="rotate(120)"/><circle cx="0" cy="-17" r="1.6" transform="rotate(150)"/><circle cx="0" cy="-17" r="1.6" transform="rotate(180)"/><circle cx="0" cy="-17" r="1.6" transform="rotate(210)"/><circle cx="0" cy="-17" r="1.6" transform="rotate(240)"/><circle cx="0" cy="-17" r="1.6" transform="rotate(270)"/><circle cx="0" cy="-17" r="1.6" transform="rotate(300)"/><circle cx="0" cy="-17" r="1.6" transform="rotate(330)"/><path d="M0 -24 L1.5 -20 M0 -24 L-1.5 -20" transform="rotate(15)"/><path d="M0 -24 L1.5 -20 M0 -24 L-1.5 -20" transform="rotate(45)"/><path d="M0 -24 L1.5 -20 M0 -24 L-1.5 -20" transform="rotate(75)"/><path d="M0 -24 L1.5 -20 M0 -24 L-1.5 -20" transform="rotate(105)"/><path d="M0 -24 L1.5 -20 M0 -24 L-1.5 -20" transform="rotate(135)"/><path d="M0 -24 L1.5 -20 M0 -24 L-1.5 -20" transform="rotate(165)"/><path d="M0 -24 L1.5 -20 M0 -24 L-1.5 -20" transform="rotate(195)"/><path d="M0 -24 L1.5 -20 M0 -24 L-1.5 -20" transform="rotate(225)"/><path d="M0 -24 L1.5 -20 M0 -24 L-1.5 -20" transform="rotate(255)"/><path d="M0 -24 L1.5 -20 M0 -24 L-1.5 -20" transform="rotate(285)"/><path d="M0 -24 L1.5 -20 M0 -24 L-1.5 -20" transform="rotate(315)"/><path d="M0 -24 L1.5 -20 M0 -24 L-1.5 -20" transform="rotate(345)"/><circle r="5" stroke-width="1.2"/><circle r="10" stroke-dasharray="1.5 1.5" stroke-width="1.4"/></g>
    <!-- r7c2 brushes -->
    <g stroke-linecap="round">
      <path d="M182 540 L186 572" stroke="#dcaab4" stroke-width="2.2"/>
      <path d="M189.5 541 L190.5 572" stroke="#dcaab4" stroke-width="2.2"/>
      <path d="M200 542 L194 573" stroke="#dcaab4" stroke-width="2.2"/>
      <path d="M206 544 L197 573" stroke="#dcaab4" stroke-width="2.2"/>
      <path d="M179 535 C179 532 184 532 184 535 L183.5 541 H179.8 Z" fill="#e8bcc4"/>
      <path d="M187 535.5 C187 533 192 533 192 535.5 L191.5 541.5 H187.5 Z" fill="#e8bcc4"/>
      <path d="M198 536 C198.5 533.5 203 534 202.8 536.5 L201.6 542.5 H198 Z" fill="#e8bcc4"/>
      <path d="M204.5 538.5 C205.2 536 209.2 537 208.6 539.4 L206.8 545 H203.4 Z" fill="#e8bcc4"/>
    </g>
    <!-- r7c3 balloon 2 -->
    <path d="M243.5 541 C244.5 536 249 534.3 254.5 534.3 C260.5 534.3 265 538 264.8 543 C264.6 549 258.5 555.5 244 573 H265.7" fill="none" stroke="#9a5e50" stroke-width="10.7" stroke-linecap="round" stroke-linejoin="round"/><path d="M243.5 541 C244.5 536 249 534.3 254.5 534.3 C260.5 534.3 265 538 264.8 543 C264.6 549 258.5 555.5 244 573 H265.7" fill="none" stroke="url(#bal)" stroke-width="9.5" stroke-linecap="round" stroke-linejoin="round"/><path d="M243.5 541 C244.5 536 249 534.3 254.5 534.3 C260.5 534.3 265 538 264.8 543 C264.6 549 258.5 555.5 244 573 H265.7" fill="none" stroke="#c88a78" stroke-width="4.3" stroke-linecap="round" stroke-linejoin="round" opacity="0.55"/><path d="M243.5 541 C244.5 536 249 534.3 254.5 534.3 C260.5 534.3 265 538 264.8 543 C264.6 549 258.5 555.5 244 573 H265.7" fill="none" stroke="#fff0e8" stroke-width="1.1" stroke-linecap="round" stroke-linejoin="round" opacity="0.8" transform="translate(-1.3 -1.3)"/>
    <!-- r8 partial -->
    <path d="M115 602 L115 593.5 L157.7 593.5 L157.7 602" fill="none" stroke="#7a524c" stroke-width="1.8"/>
    <path d="M188 600 C190 594 195 592 197 597 C200 592 205 591 207 594 C206 598 204 600 202 601 Z" fill="#6a6ab0" opacity="0.55"/>
    <circle cx="253" cy="600" r="1.4" fill="#e8e8e8"/><circle cx="262" cy="599.5" r="1.6" fill="#e8e8e8"/><circle cx="272" cy="599.5" r="1.8" fill="#e8e8e8"/>
    </g>
  </svg>
<!--/STICKERS-->
  <div class="a" style="left:99px;top:141.8px;width:190px;height:34.2px;background:#1e1e1e;"></div>
  <div class="a" style="left:108px;top:152px;width:145px;height:22px;border-radius:7px;background:#272727;"></div>
  <svg class="a" style="left:114px;top:157px" width="13" height="12" viewBox="0 0 13 12"><circle cx="5.6" cy="5.3" r="3.9" fill="none" stroke="#bdbdbd" stroke-width="1.2"/><path d="M8.5 8.2 L11 10.7" stroke="#bdbdbd" stroke-width="1.3" stroke-linecap="round"/></svg>
  <div class="a txt" style="left:132.5px;top:157.5px;font-size:8px;line-height:10px;color:#d4d4d4;letter-spacing:-0.2px;">rose gold#B76E79</div>
  <div class="a" style="left:218px;top:159px;width:8px;height:8px;border-radius:50%;background:#d9d9d9;"></div>
  <svg class="a" style="left:218px;top:159px" width="8" height="8" viewBox="0 0 8 8"><path d="M2.6 2.6 L5.4 5.4 M5.4 2.6 L2.6 5.4" stroke="#2a2a2a" stroke-width="1.1" stroke-linecap="round"/></svg>
  <svg class="a" style="left:236px;top:157px" width="12" height="11" viewBox="0 0 12 11"><path d="M1.3 2.5 H10.7 M2.8 5.2 H9.2 M4.4 7.9 H7.6" stroke="#9a9a9a" stroke-width="1.1" stroke-linecap="round"/></svg>
  <svg class="a" style="left:263px;top:157px" width="12" height="12" viewBox="0 0 12 12"><path d="M2.2 1.2 H9.8 V10.8 L6 8 L2.2 10.8 Z" fill="none" stroke="#3cbf9e" stroke-width="1.4" stroke-linejoin="round"/></svg>
  <div class="a" style="left:284.5px;top:411px;width:3.5px;height:51px;border-radius:2px;background:#3a3a3a;"></div>
   </div>
  </div>
<!--/PANEL-->
  <!-- canvas area -->
  <div class="a" style="left:289px;top:141.8px;width:612px;height:460.4px;background:#262626;"></div>
  <!-- right panel -->
  <div class="a" style="left:901px;top:141.8px;width:70px;height:460.4px;background:#1d1d1d;"></div>
  <!-- canvas -->
  <div class="a" style="left:420px;top:198.5px;width:349.5px;height:350px;background:#b76e79;"></div>
<!--TOOLS-->
  <div class="a" style="left:443px;top:145.5px;width:196px;height:27px;border-radius:6px;background:#1c1c1c;"></div>
  <div class="a" style="left:642.5px;top:145.5px;width:104.5px;height:27px;border-radius:6px;background:#1c1c1c;"></div>
  <svg class="a" style="left:443px;top:145.5px;overflow:visible" width="304" height="27" viewBox="443 145.5 304 27">
    <g fill="none" stroke="#c4c4c4" stroke-width="1.05" stroke-linecap="round" stroke-linejoin="round">
      <!-- edit -->
      <path d="M456.5 163.8 H453.4 C452.4 163.8 451.7 163.1 451.7 162.1 V155.2 C451.7 154.2 452.4 153.5 453.4 153.5 H459.8 C460.8 153.5 461.5 154.2 461.5 155.2 V157.6"/>
      <path d="M452 160 C454 158 456 158 458 160"/>
      <path d="M462.3 158.6 L457.4 163.5 L456.6 165 L458.1 164.2 L463 159.3 Z"/>
      <!-- adjust -->
      <rect x="490.6" y="154" width="10" height="10" rx="2"/>
      <path d="M493 157.2 H494.6 M496.6 157.2 H498.2 M493 160.8 H494.6 M496.6 160.8 H498.2"/>
      <!-- animation -->
      <path d="M583.8 157.2 C585.3 157.2 586.6 158.2 587.2 160.1 C587.8 158.2 589.1 157.2 590.6 157.2"/>
      <path d="M583.6 163 H592"/>
    </g>
    <circle cx="591.6" cy="156.2" r="1.1" fill="#c4c4c4"/>
    <text x="536.4" y="162.8" font-family="Liberation Sans" font-style="italic" font-size="10.5" fill="#c4c4c4">f</text>
    <text x="539.6" y="164.6" font-family="Liberation Sans" font-style="italic" font-size="8.5" fill="#c4c4c4">x</text>
    <circle cx="626.6" cy="151.6" r="2" fill="#4fd8d0"/>
    <g fill="none" stroke="#bcbcbc" stroke-width="1.1" stroke-linecap="round" stroke-linejoin="round">
      <!-- align -->
      <path d="M653.6 154 V165"/>
      <rect x="655.8" y="155" width="5.2" height="3.2" rx="1"/>
      <rect x="655.8" y="160.3" width="8.4" height="3.6" rx="1"/>
      <!-- crop -->
      <path d="M680.8 154 V161.8 C680.8 162.4 681.2 162.8 681.8 162.8 H689.4"/>
      <path d="M678.6 156.2 H686.4 C687 156.2 687.4 156.6 687.4 157.2 V165"/>
      <!-- duplicate -->
      <rect x="705.4" y="154.4" width="7.8" height="7.8" rx="1.6"/>
      <path d="M703.3 156.4 V162.6 C703.3 163.5 704 164.3 705 164.3 H711.2"/>
      <!-- trash -->
      <path d="M727.6 156.4 H736.6 M730.4 156.2 V155.2 C730.4 154.7 730.8 154.3 731.3 154.3 H733 C733.5 154.3 733.9 154.7 733.9 155.2 V156.2"/>
      <path d="M728.8 156.6 L729.3 163.8 C729.4 164.4 729.8 164.8 730.4 164.8 H734 C734.6 164.8 735 164.4 735.1 163.8 L735.6 156.6"/>
      <path d="M731.3 158.8 V162.2 M733.1 158.8 V162.2" stroke-width="0.8"/>
    </g>
  </svg>
  <div class="a txt" style="left:465.2px;top:154.5px;font-size:7.2px;line-height:9px;color:#d2d2d2;-webkit-text-stroke:0.25px #d2d2d2;letter-spacing:0px;">Edit</div>
  <div class="a txt" style="left:503px;top:154.5px;font-size:7.2px;line-height:9px;color:#d2d2d2;-webkit-text-stroke:0.25px #d2d2d2;letter-spacing:0px;">Adjust</div>
  <div class="a txt" style="left:549.3px;top:154.5px;font-size:7.2px;line-height:9px;color:#d2d2d2;-webkit-text-stroke:0.25px #d2d2d2;letter-spacing:0px;">Effects</div>
  <div class="a txt" style="left:596.3px;top:154.5px;font-size:7.2px;line-height:9px;color:#d2d2d2;-webkit-text-stroke:0.25px #d2d2d2;letter-spacing:0px;">Animation</div>
  <!-- collapse tabs -->
  <div class="a" style="left:287px;top:343.5px;width:14px;height:30px;border-radius:0 5px 5px 0;background:#1c1c1c;"></div>
  <svg class="a" style="left:290px;top:353px" width="10" height="12" viewBox="0 0 10 12"><path d="M6.4 3.4 L3.8 6 L6.4 8.6" fill="none" stroke="#c8c8c8" stroke-width="1.1" stroke-linecap="round" stroke-linejoin="round"/></svg>
  <div class="a" style="left:889px;top:344px;width:14px;height:30px;border-radius:5px 0 0 5px;background:#1c1c1c;"></div>
  <svg class="a" style="left:890px;top:353px" width="10" height="12" viewBox="0 0 10 12"><path d="M3.6 3.4 L6.2 6 L3.6 8.6" fill="none" stroke="#c8c8c8" stroke-width="1.1" stroke-linecap="round" stroke-linejoin="round"/></svg>
  <!-- undo redo -->
  <div class="a" style="left:295.5px;top:578.4px;width:44px;height:22px;border-radius:6px;background:#1c1c1c;"></div>
  <svg class="a" style="left:295.5px;top:578.4px" width="44" height="22" viewBox="0 0 44 22">
    <path d="M6.5 9 H12.5 C14.5 9 15.8 10.3 15.8 12.3 V13.6 M8.8 6.7 L6.5 9 L8.8 11.3" fill="none" stroke="#cfcfcf" stroke-width="1.1" stroke-linecap="round" stroke-linejoin="round"/>
    <path d="M37.5 9 H31.5 C29.5 9 28.2 10.3 28.2 12.3 V13.6 M35.2 6.7 L37.5 9 L35.2 11.3" fill="none" stroke="#4c4c4c" stroke-width="1.1" stroke-linecap="round" stroke-linejoin="round"/>
  </svg>
  <!-- zoom -->
  <div class="a" style="left:802px;top:577.6px;width:68px;height:21.8px;border-radius:6px;background:#1c1c1c;"></div>
  <div class="a" style="left:874.4px;top:577.6px;width:21.5px;height:21.8px;border-radius:6px;background:#1c1c1c;"></div>
  <svg class="a" style="left:802px;top:577.6px;overflow:visible" width="94" height="22" viewBox="802 577.6 94 22">
    <g fill="none" stroke="#c8c8c8" stroke-width="1.05" stroke-linecap="round">
      <circle cx="811.6" cy="588.2" r="3.6"/><path d="M814.3 590.9 L816 592.6 M810 588.2 H813.2"/>
      <circle cx="858.8" cy="588.2" r="3.6"/><path d="M861.5 590.9 L863.2 592.6 M857.2 588.2 H860.4 M858.8 586.6 V589.8"/>
    </g>
    <g fill="none" stroke="#c8c8c8" stroke-width="1.05" stroke-linejoin="round">
      <path d="M889.65 588.10 L889.47 588.58 L889.01 588.98 L888.53 589.29 L888.25 589.61 L888.23 590.04 L888.34 590.60 L888.38 591.20 L888.17 591.67 L887.70 591.88 L887.10 591.84 L886.54 591.73 L886.11 591.75 L885.79 592.03 L885.48 592.51 L885.08 592.97 L884.60 593.15 L884.12 592.97 L883.72 592.51 L883.41 592.03 L883.09 591.75 L882.66 591.73 L882.10 591.84 L881.50 591.88 L881.03 591.67 L880.82 591.20 L880.86 590.60 L880.97 590.04 L880.95 589.61 L880.67 589.29 L880.19 588.98 L879.73 588.58 L879.55 588.10 L879.73 587.62 L880.19 587.22 L880.67 586.91 L880.95 586.59 L880.97 586.16 L880.86 585.60 L880.82 585.00 L881.03 584.53 L881.50 584.32 L882.10 584.36 L882.66 584.47 L883.09 584.45 L883.41 584.17 L883.72 583.69 L884.12 583.23 L884.60 583.05 L885.08 583.23 L885.48 583.69 L885.79 584.17 L886.11 584.45 L886.54 584.47 L887.10 584.36 L887.70 584.32 L888.17 584.53 L888.38 585.00 L888.34 585.60 L888.23 586.16 L888.25 586.59 L888.53 586.91 L889.01 587.22 L889.47 587.62 Z"/>
      <circle cx="884.6" cy="588.1" r="1.6"/>
    </g>
  </svg>
  <div class="a txt" style="left:826.5px;top:584px;font-size:7.5px;line-height:9px;color:#d8d8d8;-webkit-text-stroke:0.25px #d8d8d8;letter-spacing:-0.1px;">100%</div>
<!--/TOOLS-->
<!--CANVAS-->
  <svg class="a" style="left:420px;top:198.5px;overflow:visible" width="350" height="350" viewBox="420 198.5 350 350">
    <defs>
      <radialGradient id="wUL" gradientUnits="userSpaceOnUse" cx="46" cy="50" r="46"><stop offset="0" stop-color="#dcb2b4"/><stop offset="0.55" stop-color="#d0a2a6"/><stop offset="1" stop-color="#ac7880"/></radialGradient>
      <radialGradient id="wLL" gradientUnits="userSpaceOnUse" cx="44" cy="62" r="36"><stop offset="0" stop-color="#d6aaac"/><stop offset="0.6" stop-color="#c8989c"/><stop offset="1" stop-color="#a87680"/></radialGradient>
      <radialGradient id="wUR" gradientUnits="userSpaceOnUse" cx="60" cy="64" r="48"><stop offset="0" stop-color="#e6c4c2"/><stop offset="0.6" stop-color="#d8b0b0"/><stop offset="1" stop-color="#b6848c"/></radialGradient>
      <radialGradient id="wLR" gradientUnits="userSpaceOnUse" cx="56" cy="80" r="30"><stop offset="0" stop-color="#f4dcd8"/><stop offset="0.7" stop-color="#ecccc8"/><stop offset="1" stop-color="#caa0a4"/></radialGradient>
      <radialGradient id="w2L" gradientUnits="userSpaceOnUse" cx="60" cy="62" r="50"><stop offset="0" stop-color="#dcb4b6"/><stop offset="0.6" stop-color="#cea0a4"/><stop offset="1" stop-color="#aa7880"/></radialGradient>
      <radialGradient id="w2R" gradientUnits="userSpaceOnUse" cx="84" cy="62" r="48"><stop offset="0" stop-color="#f2d8d4"/><stop offset="0.6" stop-color="#e4c0be"/><stop offset="1" stop-color="#b8868e"/></radialGradient>
      <filter id="soft" x="-20%" y="-20%" width="140%" height="140%"><feGaussianBlur stdDeviation="0.5"/></filter>
      <g id="bfly">
        <path d="M52.5 60 C53.5 48 53 35 51.9 24 C50.5 16 47 11 41 8 C37 6.5 33 9 30 14 C26 20 23 28 22.4 37 C22 40 21 42 21 42 C30 46 42 52 52.5 60 Z" fill="url(#wUL)" stroke="#a47080" stroke-opacity="0.5" stroke-width="1"/>
        <path d="M52 62 C45 55 38 47 32 43.5 C26 41 21 41 17 44 C12 48 10.5 55 10.8 62 C11 68 13 72 17 74 C24 77 34 75 42 71 C47 68 50 65 52 63 Z" fill="url(#wLL)" stroke="#a47080" stroke-opacity="0.5" stroke-width="1"/>
        <path d="M52.4 62 C56 58 60 55.5 64 54.3 C70 51.5 78 49.5 87.6 49 C94 49 100 50.5 104.7 55.2 C107 58 106 61 105 62 C102 66 96 70.5 91.4 73.3 C87 76 83 78.5 80.9 80 C72 78 62 73 54 66 Z" fill="url(#wUR)" stroke="#a87884" stroke-opacity="0.45" stroke-width="1"/>
        <path d="M51 64.7 C58 69 66 73 73 76 L80.5 80.5 C80 84 79 87 77.1 89.5 C74.5 93.5 71 95.5 68.5 97 C65 99.5 62 101.5 59 101.8 C55 102 52 102 50.5 100.9 C48 99 47 96 46.7 93.3 C45.5 88 44.5 84 44.8 80 C45 76 45.5 73 46.7 71.4 C48 68.5 49.5 66.5 51 64.7 Z" fill="url(#wLR)" stroke="#b08890" stroke-opacity="0.4" stroke-width="0.9"/>
        <g fill="none" stroke="#f6e0dc" stroke-opacity="0.5" stroke-width="1.2" stroke-linecap="round">
          <path d="M50 52 C46 40 42 28 38 14 M47 54 C40 46 33 38 27 28 M51 40 C49 30 47 22 44 14"/>
          <path d="M46 62 C38 56 28 52 16 52 M45 66 C36 67 26 69 16 69 M44 59 C36 52 28 47 20 46"/>
          <path d="M58 62 C70 57 84 54 100 56 M60 67 C72 68 86 66 96 64 M62 59 C74 53 86 51 96 51"/>
          <path d="M52 72 C52 82 53 92 54 98 M57 74 C62 82 66 88 68 94 M49 76 C48 84 48 90 49 96"/>
        </g>
        <g fill="none" stroke="#94606a" stroke-opacity="0.4" stroke-width="0.9" stroke-linecap="round">
          <path d="M44 40 C40 34 36 26 34 18 M48 48 C44 40 42 32 40 24 M40 62 C30 60 22 60 14 60 M42 70 C34 72 24 72 16 72"/>
          <path d="M70 58 C80 55 90 54 100 58 M66 70 C76 72 86 70 94 68"/>
          <path d="M74 77 L80 80.5 M55 80 C56 88 58 94 60 99"/>
        </g>
        <path d="M50.5 60 L54.5 68" stroke="#8a5660" stroke-width="2.2" stroke-linecap="round"/>
      </g>
    </defs>
    <g filter="url(#soft)">
      <use href="#bfly" transform="translate(480 255)"/>
      <use href="#bfly" transform="translate(416 443)"/>
      <g transform="translate(495 370)">
        <path d="M67.6 60 C60 52 52 44 40.3 37 C33 33.5 24 32 17 34 C13 35.5 13 39 14.5 43 C17 50 24 56 32.2 59.6 C42 64 55 66.5 67.6 67.6 Z" fill="url(#w2L)" stroke="#a47080" stroke-opacity="0.5" stroke-width="1"/>
        <path d="M67.6 66 C58 66 45 66.5 35.4 67.6 C37 76 42 84 48.3 90.2 C51 93.5 53 96 56 96 C59 96 62 94 64 90 C67 84 68 76 68 68 Z" fill="url(#wLL)" stroke="#a47080" stroke-opacity="0.5" stroke-width="1"/>
        <path d="M69.2 62 C70 55 70.5 50 71 46 C72 38 75 30 80 24 C84 19 89 15 95 13.5 C99 13 101 15 101.4 20 C102 30 101.4 42 101.4 51.5 C102.5 58 104 63 103.9 67.6 C103.5 73 102 78 99.8 80.5 C97 83.5 94 84.5 91 83 C84 80 76 75 70.9 70.9 C69.5 67 69 64 69.2 62 Z" fill="url(#w2R)" stroke="#a87884" stroke-opacity="0.45" stroke-width="1"/>
        <g fill="none" stroke="#f4dcd8" stroke-opacity="0.55" stroke-width="1.1" stroke-linecap="round">
          <path d="M64 60 C52 50 36 42 20 38 M62 64 C50 60 36 56 24 50"/>
          <path d="M64 70 C56 76 50 84 48 90 M65 71 C62 78 58 86 57 92"/>
          <path d="M71 60 C76 46 84 30 95 17 M73 64 C82 56 92 50 100 48 M73 70 C82 72 92 74 100 74"/>
        </g>
        <path d="M101 50 L92 53" stroke="#9a6470" stroke-opacity="0.4" stroke-width="0.8"/>
        <path d="M68 61 L68.5 72" stroke="#8a5660" stroke-width="2.2" stroke-linecap="round"/>
      </g>
    </g>
    <!-- selection -->
    <g>
      <rect x="471" y="236.8" width="150" height="209.6" fill="none" stroke="#b690f5" stroke-width="1.1"/>
      <g fill="#fff" stroke="#b690f5" stroke-width="1">
        <circle cx="471" cy="236.8" r="3.3"/><circle cx="621" cy="236.8" r="3.3"/>
        <circle cx="471" cy="446.4" r="3.3"/><circle cx="621" cy="446.4" r="3.3"/>
      </g>
      <g fill="#fff">
        <rect x="537" y="234.8" width="18" height="4" rx="2"/>
        <rect x="537" y="444.4" width="18" height="4" rx="2"/>
        <rect x="469" y="333.5" width="4" height="17" rx="2"/>
        <rect x="619" y="333.5" width="4" height="17" rx="2"/>
      </g>
      <circle cx="546" cy="225.3" r="5.8" fill="#fff"/>
      <path d="M543.4 224.3 A2.8 2.8 0 0 1 548.6 224.3 M548.6 226.3 A2.8 2.8 0 0 1 543.4 226.3" fill="none" stroke="#333" stroke-width="0.9"/>
      <path d="M548.8 222.8 L548.7 224.5 L547 224.4 M543.2 227.8 L543.3 226.1 L545 226.2" fill="none" stroke="#333" stroke-width="0.8"/>
    </g>
  </svg>
<!--/CANVAS-->
<!--RIGHT-->
  <svg class="a" style="left:901px;top:141px;overflow:visible" width="70" height="200" viewBox="901 141 70 200">
    <defs>
      <pattern id="chk" x="905" y="146" width="5.6" height="5.6" patternUnits="userSpaceOnUse">
        <rect x="0" y="0" width="5.6" height="5.6" fill="#242424"/>
        <rect x="0" y="0" width="2.8" height="2.8" fill="#3c3c3c"/><rect x="2.8" y="2.8" width="2.8" height="2.8" fill="#3c3c3c"/>
      </pattern>
      <radialGradient id="tb" cx="0.5" cy="0.5" r="0.6"><stop offset="0" stop-color="#f0d0d0"/><stop offset="1" stop-color="#c89098"/></radialGradient>
      <g id="mini">
        <path d="M9.5 11.5 C9.7 8 9.5 4.5 8 2.5 C7 1.4 5.6 1.3 5 2.3 C4 4 4.2 7.4 6 9.6 Z" fill="url(#tb)"/>
        <path d="M9.3 11.6 C7.5 9.6 5 8 2.6 7.9 C1.4 8 1.2 10 1.6 11.6 C2.2 13 3.4 13.4 5 13.2 C6.6 13 8.2 12.4 9.3 12 Z" fill="#d8a8ac"/>
        <path d="M9.8 11 C11.6 9.6 14 8.8 16.6 8.8 C18 8.9 18.7 9.6 18.6 10.6 C18.3 12 16.6 13 14.5 13.6 C12.8 14 11.2 13.9 10 13.4 Z" fill="url(#tb)"/>
        <path d="M9.6 12 C11.2 12.6 12.8 13.2 14.2 13.8 C13.8 15.6 12.5 17.4 11 18 C9.8 18.4 8.6 18 8.4 16.8 C8.1 15.2 8.4 13.4 9.2 12.4 Z" fill="#f0d4d2"/>
      </g>
    </defs>
    <rect x="905" y="146.5" width="57.5" height="45" rx="3.5" fill="url(#chk)"/>
    <rect x="905.8" y="147.3" width="56" height="43.5" rx="3" fill="none" stroke="#3c9482" stroke-width="1.4"/>
    <circle cx="952.5" cy="153.6" r="0.9" fill="#e8e8e8"/><circle cx="955.3" cy="153.6" r="0.9" fill="#e8e8e8"/><circle cx="958.1" cy="153.6" r="0.9" fill="#e8e8e8"/>
    <use href="#mini" transform="translate(924 155)"/>
    <rect x="905" y="192.5" width="57.5" height="45" rx="2" fill="url(#chk)"/>
    <use href="#mini" transform="translate(921 205) scale(0.85)"/>
    <rect x="905" y="239.3" width="57.5" height="44.7" rx="2" fill="url(#chk)"/>
    <use href="#mini" transform="translate(924 248)"/>
    <rect x="905" y="286.3" width="57.5" height="44" rx="3" fill="#b76e79"/>
    <rect x="907.6" y="319.5" width="51.8" height="8.6" rx="4.3" fill="#2a2326" opacity="0.92"/>
  </svg>
  <div class="a txt" style="left:907.6px;top:320.6px;width:51.8px;text-align:center;font-size:5.6px;line-height:6.5px;color:#d8d8d8;">1080x1080px</div>
<!--/RIGHT-->
</div></div></div>
<!--CIRCLES-->
  <div class="a" style="left:32.8px;top:292.3px;width:72px;height:72px;border-radius:50%;background:rgba(204,26,208,0.63);box-shadow:inset 0 0 0 2.4px rgba(238,228,238,0.95), 0 0 1.2px rgba(238,228,238,0.7);"></div>
  <svg class="a" style="left:67px;top:322px" width="12" height="12" viewBox="0 0 12 12"><g fill="none" stroke="#e6a6e6" stroke-width="1.1" stroke-linecap="round" stroke-linejoin="round"><path d="M11.4 6.8 V2.6 C11.4 1.4 10.6 0.6 9.4 0.6 H2.6 C1.4 0.6 0.6 1.4 0.6 2.6 V9.4 C0.6 10.6 1.4 11.4 2.6 11.4 H6.8 Z M6.8 11.4 V8.4 C6.8 7.5 7.5 6.8 8.4 6.8 H11.4"/></g></svg>
  <div class="a" style="left:212.8px;top:339.8px;width:72px;height:72px;border-radius:50%;background:rgba(204,26,208,0.63);box-shadow:inset 0 0 0 2.4px rgba(238,228,238,0.95), 0 0 1.2px rgba(238,228,238,0.7);"></div>
  <svg class="a" style="left:237px;top:355.5px" width="30" height="30" viewBox="0 0 24 24">
    <path d="M12.5 12.5 C12.6 9 12.4 5.4 10.6 3.2 C9.6 2.2 8.2 2 7.6 3.2 C6.4 5.4 6.8 9 9 11.2 C7.2 10.6 5.2 10.8 4.2 11.6 C3.6 12.6 4.2 14.6 5.6 15.4 C7.4 16 10 14.8 12.2 13.2 Z" fill="#c64cc2"/>
    <path d="M13 12.6 C14.8 11 17.2 10.2 20 10.2 C21.6 10.4 22.2 11.4 21.8 12.6 C21.2 14 19.4 14.8 17.4 15.2 C16.8 17.2 15.2 19.2 13.6 19.6 C12.4 19.8 11.6 18.8 11.8 17.2 C12 15.4 12.4 13.8 13 12.8 Z" fill="#d45ccf"/>
  </svg>
<!--/CIRCLES-->

</body></html>
